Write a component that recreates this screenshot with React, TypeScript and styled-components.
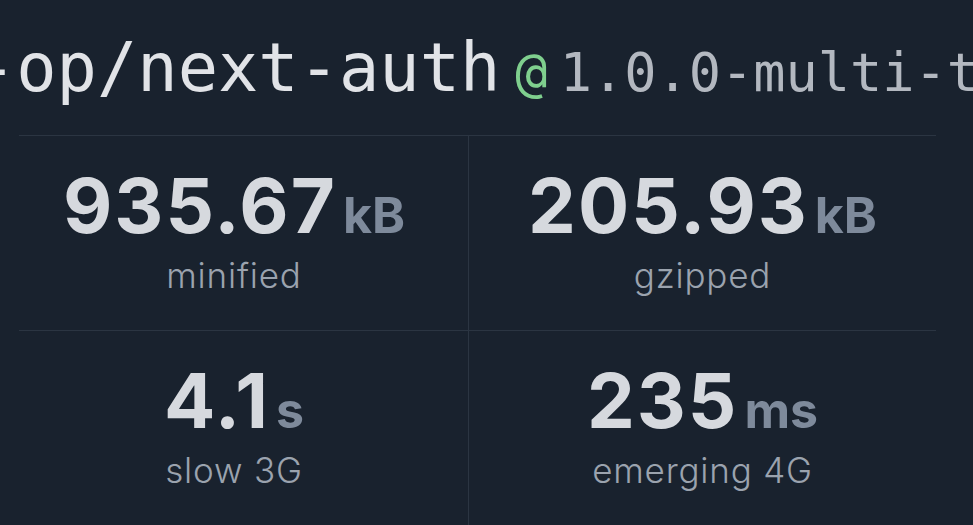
import React from "react";
import styled, { createGlobalStyle } from "styled-components";

const Global = createGlobalStyle`
  html, body {
    margin: 0;
    padding: 0;
    background: #19222e;
    overflow: hidden;
  }
  #root {
    width: 973px;
    height: 525px;
    overflow: hidden;
  }
`;

const Page = styled.div`
  width: 973px;
  height: 525px;
  background: #19222e;
  display: flex;
  flex-direction: column;
  overflow: hidden;
`;

const Header = styled.div`
  height: 136px;
  display: flex;
  justify-content: center;
  align-items: baseline;
  white-space: nowrap;
  padding-top: 35px;
  box-sizing: border-box;
  font-family: "DejaVu Sans Mono", monospace;
`;

const PackageName = styled.span`
  font-size: 67px;
  line-height: 1;
  color: #e1e3e7;
`;

const At = styled.span`
  font-size: 53.6px;
  line-height: 1;
  color: #7fcf8e;
  margin: 0 12px 0 15px;
`;

const Version = styled.span`
  font-size: 53.6px;
  line-height: 1;
  color: #b3b8c0;
  margin-right: 18px;
`;

const Grid = styled.div`
  display: grid;
  grid-template-columns: 468px 468px;
  grid-auto-rows: 195px;
`;

const Cell = styled.div<{ $right?: boolean }>`
  position: relative;
  display: flex;
  flex-direction: column;
  align-items: center;
  padding-top: 32px;
  box-sizing: border-box;
  border-left: ${(p) => (p.$right ? "1px solid #2b3542" : "none")};
  &::before {
    content: "";
    position: absolute;
    top: 0;
    left: ${(p) => (p.$right ? "0" : "19px")};
    right: 0;
    height: 1px;
    background: #2b3542;
  }
`;

const Value = styled.div`
  font-family: Inter, "Liberation Sans", sans-serif;
  font-weight: 700;
  display: flex;
  align-items: baseline;
  line-height: 1;
`;

const Number = styled.span`
  font-size: 76px;
  color: #d6d9de;
  letter-spacing: 2px;
`;

const Unit = styled.span`
  font-size: 50px;
  color: #7e8a9b;
  margin-left: 6px;
`;

const Label = styled.div`
  font-family: Inter, "Liberation Sans", sans-serif;
  font-weight: 300;
  font-size: 35px;
  color: #9ba3ae;
  margin-top: 15px;
  letter-spacing: 0.8px;
  line-height: 1;
`;

type Stat = { value: string; unit: string; label: string };

const stats: Stat[] = [
  { value: "935.67", unit: "kB", label: "minified" },
  { value: "205.93", unit: "kB", label: "gzipped" },
  { value: "4.1", unit: "s", label: "slow 3G" },
  { value: "235", unit: "ms", label: "emerging 4G" },
];

export default function App() {
  return (
    <>
      <Global />
      <Page>
        <Header>
          <PackageName>@sys-op/next-auth</PackageName>
          <At>@</At>
          <Version>1.0.0-multi-tenant</Version>
        </Header>
        <Grid>
          {stats.map((s, i) => (
            <Cell key={s.label} $right={i % 2 === 1}>
              <Value>
                <Number>{s.value}</Number>
                <Unit>{s.unit}</Unit>
              </Value>
              <Label>{s.label}</Label>
            </Cell>
          ))}
        </Grid>
      </Page>
    </>
  );
}
